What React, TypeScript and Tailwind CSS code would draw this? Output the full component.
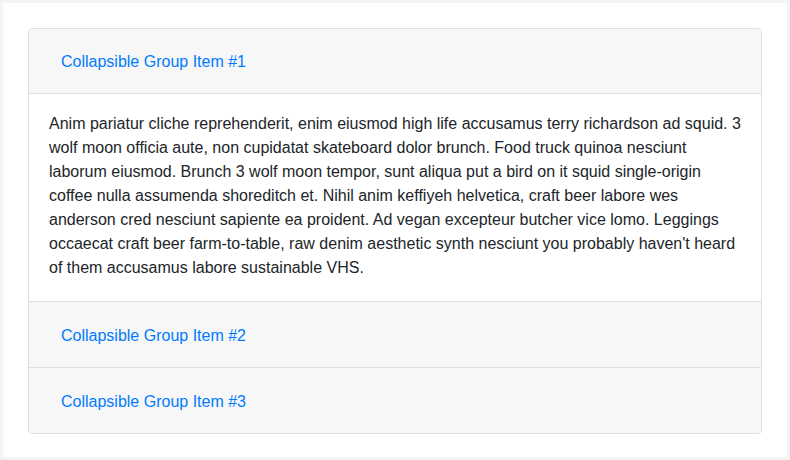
const items = ["Collapsible Group Item #1", "Collapsible Group Item #2", "Collapsible Group Item #3"];

const body =
  "Anim pariatur cliche reprehenderit, enim eiusmod high life accusamus terry richardson ad squid. 3 wolf moon officia aute, non cupidatat skateboard dolor brunch. Food truck quinoa nesciunt laborum eiusmod. Brunch 3 wolf moon tempor, sunt aliqua put a bird on it squid single-origin coffee nulla assumenda shoreditch et. Nihil anim keffiyeh helvetica, craft beer labore wes anderson cred nesciunt sapiente ea proident. Ad vegan excepteur butcher vice lomo. Leggings occaecat craft beer farm-to-table, raw denim aesthetic synth nesciunt you probably haven't heard of them accusamus labore sustainable VHS.";

export default function App() {
  return (
    <div className="w-[790px] h-[460px] border-[3px] border-[#f4f4f4] bg-white p-[25px] font-['Liberation_Sans',Arial,sans-serif] text-[#212529]">
      <div className="border border-[#dfdfdf] rounded-[4px] overflow-hidden">
        {items.map((label, i) => (
          <div key={label} className={i > 0 ? "border-t border-[#dfdfdf]" : ""}>
            <div className={`bg-[#f7f7f7] px-5 ${i === 0 ? "h-16 pt-[21px]" : "h-[65px] pt-[22px]"}`}>
              <button className="block px-3 text-base leading-6 text-[#007bff] hover:underline">{label}</button>
            </div>
            {i === 0 && (
              <div className="border-t border-[#dfdfdf] px-5 pt-[18px] pb-[21px] text-base leading-6">{body}</div>
            )}
          </div>
        ))}
      </div>
    </div>
  );
}
